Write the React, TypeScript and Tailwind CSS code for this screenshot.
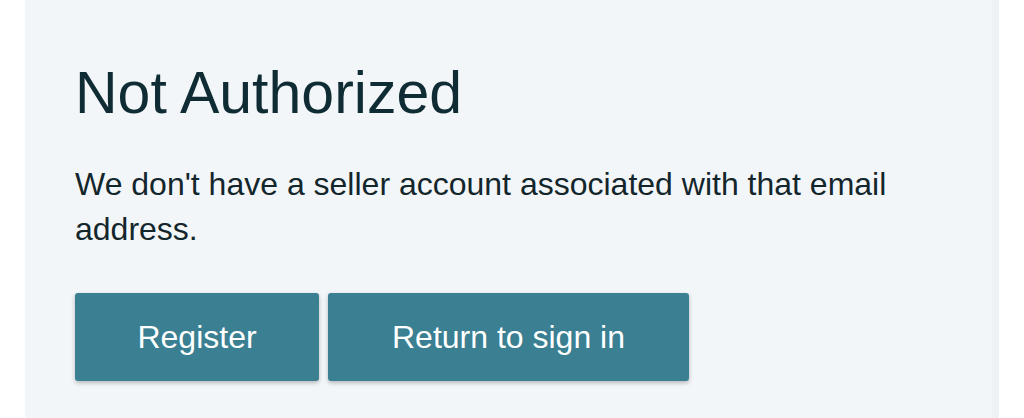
import React from 'react';

export default function App() {
  return (
    <div className="min-h-[418px] bg-white pl-[25px] pr-[25px]" style={{ fontFamily: '"Liberation Sans", Arial, sans-serif' }}>
      <div className="h-[418px] bg-[#f3f6f8] border-r-[7px] border-[#eff2f5] pl-[50px] pr-[43px] pt-[64px]">
        <h1 className="text-[59px] leading-[59px] text-[#0f2c35] font-normal">Not Authorized</h1>
        <p className="mt-[39px] text-[32px] leading-[45px] text-[#13262c]">
          We don't have a seller account associated with that email address.
        </p>
        <div className="mt-[41px] flex gap-[9px]">
          <button className="h-[88px] w-[244px] rounded-[3px] bg-[#3a7f92] text-white text-[32px] shadow-[0_2px_4px_rgba(0,0,0,0.25)]">
            Register
          </button>
          <button className="h-[88px] w-[361px] rounded-[3px] bg-[#3a7f92] text-white text-[32px] shadow-[0_2px_4px_rgba(0,0,0,0.25)]">
            Return to sign in
          </button>
        </div>
      </div>
    </div>
  );
}
